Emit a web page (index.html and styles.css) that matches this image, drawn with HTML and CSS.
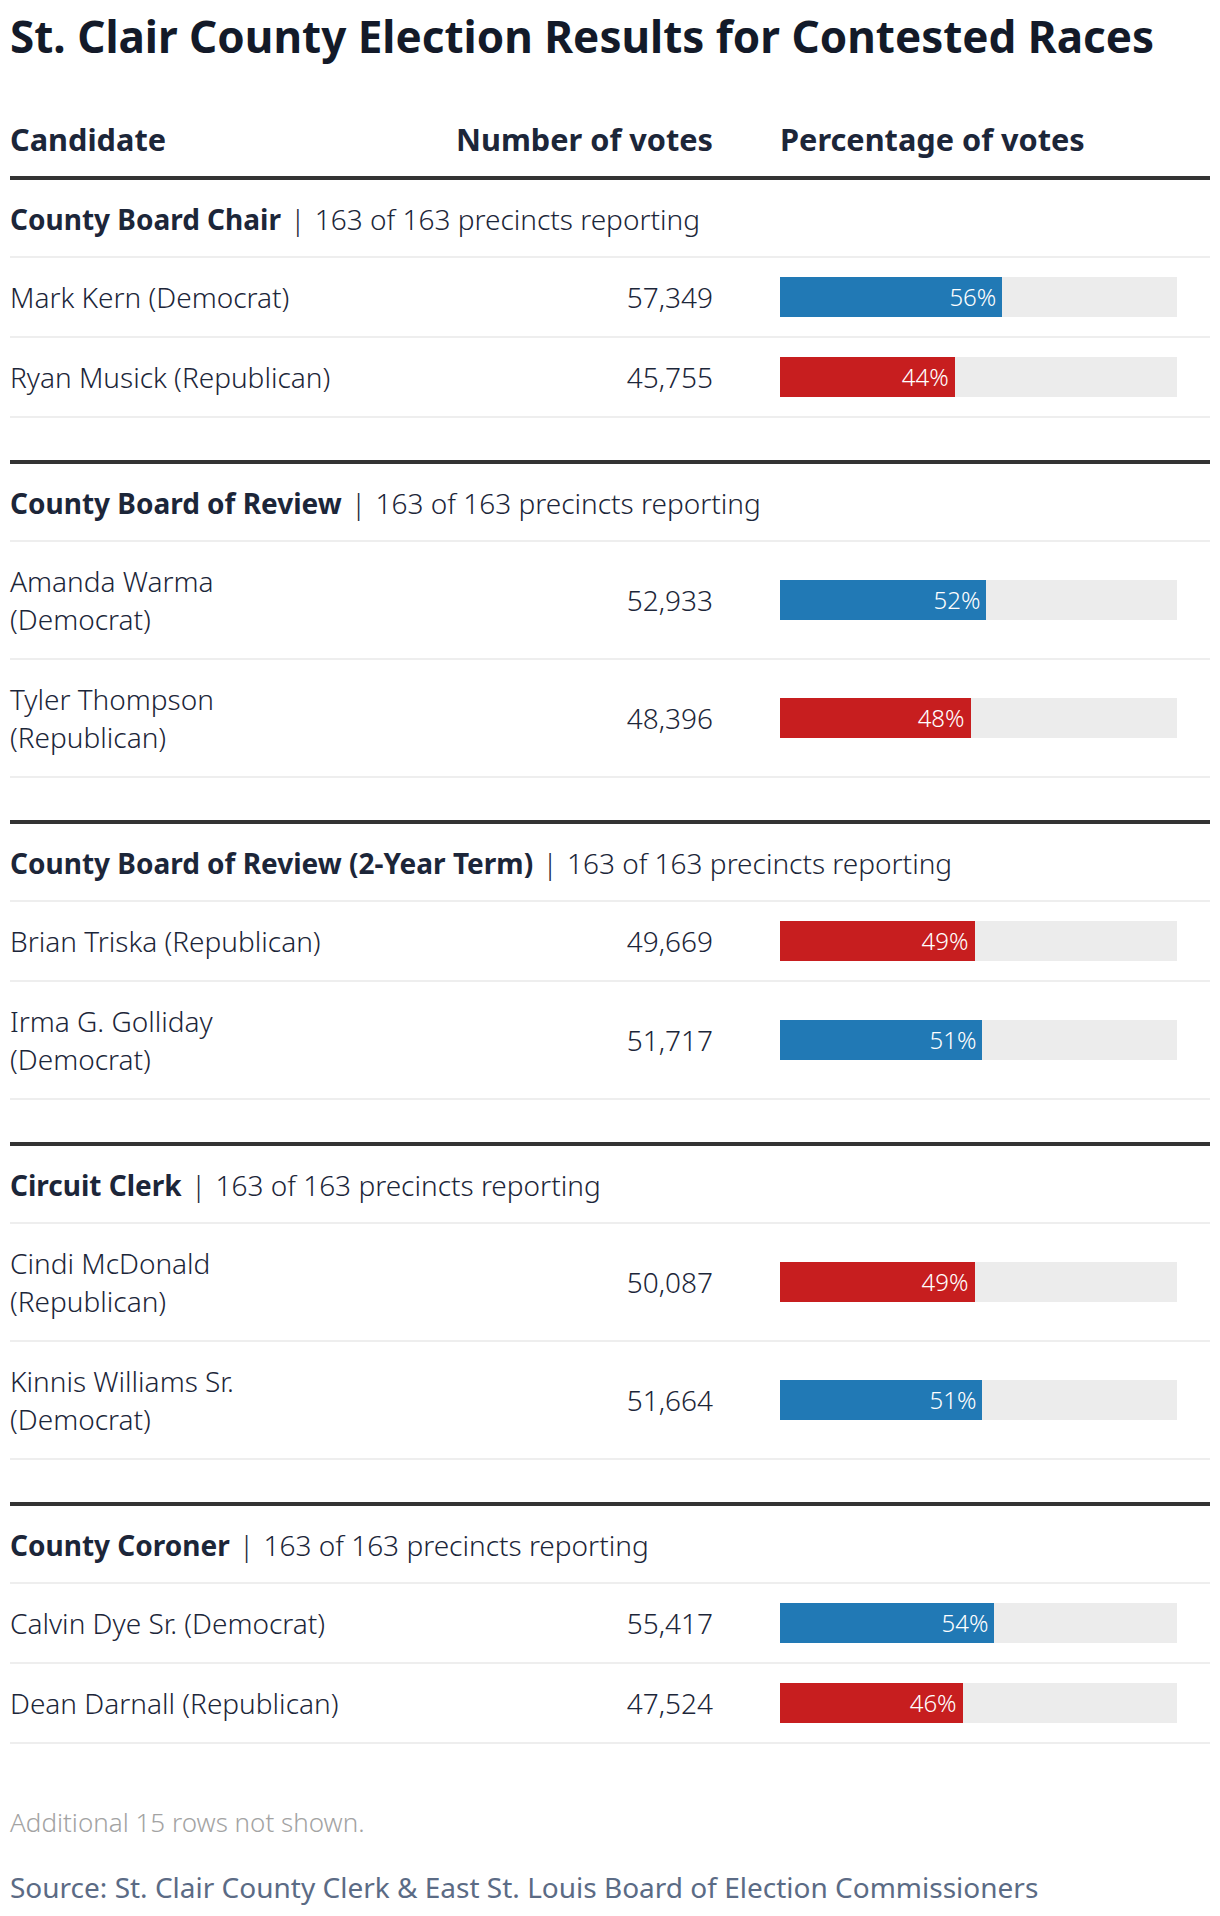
FILE: index.html
```html
<!DOCTYPE html>
<html lang="en">
<head>
<meta charset="utf-8">
<title>St. Clair County Election Results for Contested Races</title>
<link rel="stylesheet" href="styles.css">
</head>
<body>
<div class="chart">
  <h1 class="title">St. Clair County Election Results for Contested Races</h1>

  <div class="thead row">
    <div class="col-name">Candidate</div>
    <div class="col-num">Number of votes</div>
    <div class="col-pct">Percentage of votes</div>
  </div>

  <div class="section">
    <div class="section-head"><b>County Board Chair</b> <span class="sep">|</span> 163 of 163 precincts reporting</div>
    <div class="row">
      <div class="col-name">Mark Kern (Democrat)</div>
      <div class="col-num">57,349</div>
      <div class="col-pct"><div class="track"><div class="bar dem" style="width:56%">56%</div></div></div>
    </div>
    <div class="row">
      <div class="col-name">Ryan Musick (Republican)</div>
      <div class="col-num">45,755</div>
      <div class="col-pct"><div class="track"><div class="bar rep" style="width:44%">44%</div></div></div>
    </div>
  </div>

  <div class="section">
    <div class="section-head"><b>County Board of Review</b> <span class="sep">|</span> 163 of 163 precincts reporting</div>
    <div class="row">
      <div class="col-name">Amanda Warma<br>(Democrat)</div>
      <div class="col-num">52,933</div>
      <div class="col-pct"><div class="track"><div class="bar dem" style="width:52%">52%</div></div></div>
    </div>
    <div class="row">
      <div class="col-name">Tyler Thompson<br>(Republican)</div>
      <div class="col-num">48,396</div>
      <div class="col-pct"><div class="track"><div class="bar rep" style="width:48%">48%</div></div></div>
    </div>
  </div>

  <div class="section">
    <div class="section-head"><b>County Board of Review (2-Year Term)</b> <span class="sep">|</span> 163 of 163 precincts reporting</div>
    <div class="row">
      <div class="col-name">Brian Triska (Republican)</div>
      <div class="col-num">49,669</div>
      <div class="col-pct"><div class="track"><div class="bar rep" style="width:49%">49%</div></div></div>
    </div>
    <div class="row">
      <div class="col-name">Irma G. Golliday<br>(Democrat)</div>
      <div class="col-num">51,717</div>
      <div class="col-pct"><div class="track"><div class="bar dem" style="width:51%">51%</div></div></div>
    </div>
  </div>

  <div class="section">
    <div class="section-head"><b>Circuit Clerk</b> <span class="sep">|</span> 163 of 163 precincts reporting</div>
    <div class="row">
      <div class="col-name">Cindi McDonald<br>(Republican)</div>
      <div class="col-num">50,087</div>
      <div class="col-pct"><div class="track"><div class="bar rep" style="width:49%">49%</div></div></div>
    </div>
    <div class="row">
      <div class="col-name">Kinnis Williams Sr.<br>(Democrat)</div>
      <div class="col-num">51,664</div>
      <div class="col-pct"><div class="track"><div class="bar dem" style="width:51%">51%</div></div></div>
    </div>
  </div>

  <div class="section">
    <div class="section-head"><b>County Coroner</b> <span class="sep">|</span> 163 of 163 precincts reporting</div>
    <div class="row">
      <div class="col-name">Calvin Dye Sr. (Democrat)</div>
      <div class="col-num">55,417</div>
      <div class="col-pct"><div class="track"><div class="bar dem" style="width:54%">54%</div></div></div>
    </div>
    <div class="row">
      <div class="col-name">Dean Darnall (Republican)</div>
      <div class="col-num">47,524</div>
      <div class="col-pct"><div class="track"><div class="bar rep" style="width:46%">46%</div></div></div>
    </div>
  </div>

  <p class="note">Additional 15 rows not shown.</p>
  <p class="source">Source: St. Clair County Clerk &amp; East St. Louis Board of Election Commissioners</p>
</div>
</body>
</html>
```

FILE: styles.css
```css
html, body {
  margin: 0;
  padding: 0;
  background: #ffffff;
}

body {
  font-family: "Noto Sans", "Open Sans", sans-serif;
  color: #1c2639;
}

.chart {
  padding: 10px 10px 0 10px;
}

.title {
  margin: 0;
  font-size: 44px;
  line-height: 53px;
  font-weight: 700;
  color: #131a29;
  letter-spacing: 0;
}

.row {
  display: grid;
  grid-template-columns: 340px 1fr 397px;
  column-gap: 67px;
  padding-right: 33px;
  align-items: center;
  font-size: 28px;
  line-height: 38px;
  font-weight: 300;
}

.thead {
  margin-top: 56px;
  padding-bottom: 17px;
  border-bottom: 4px solid #333333;
  font-weight: 700;
  font-size: 30.7px;
  line-height: 40px;
}

.thead .col-pct {
  white-space: nowrap;
}

.col-num {
  text-align: right;
}

.section {
  margin-bottom: 42px;
}

.section + .section {
  border-top: 4px solid #333333;
}

.section-head {
  padding: 20px 0 18px 0;
  border-bottom: 2px solid #eeeeee;
  font-size: 28px;
  line-height: 38px;
  font-weight: 300;
}

.section-head b {
  font-weight: 700;
}

.section-head .sep {
  padding: 0 2px;
}

.section .row {
  padding-top: 20px;
  padding-bottom: 20px;
  border-bottom: 2px solid #eeeeee;
}

.track {
  height: 40px;
  margin: -1px 0;
  background: #ececec;
}

.bar {
  height: 40px;
  box-sizing: border-box;
  padding-right: 6px;
  text-align: right;
  color: #ffffff;
  font-size: 24px;
  line-height: 40px;
  font-weight: 300;
}

.bar.dem {
  background: #2179b5;
}

.bar.rep {
  background: #c71e1f;
}

.note {
  margin: 60px 0 0 0;
  font-size: 26px;
  line-height: 36px;
  font-weight: 300;
  color: #a3a3a3;
}

.source {
  margin: 28px 0 0 0;
  font-size: 28px;
  line-height: 38px;
  font-weight: 400;
  color: #5b6b85;
}
```
